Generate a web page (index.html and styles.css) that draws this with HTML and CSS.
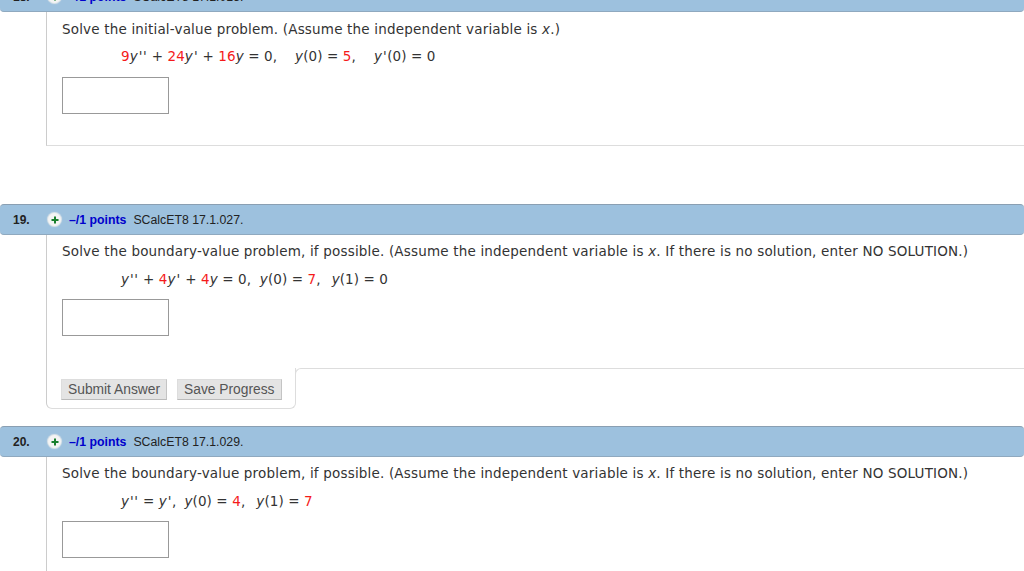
FILE: index.html
```html
<!DOCTYPE html>
<html lang="en">
<head>
  <meta charset="UTF-8">
  <title>Assignment</title>
  <link rel="stylesheet" href="styles.css">
</head>
<body>
  <div class="page">
    <!-- Question 18, scrolled off the top -->
    <section class="question first">
      <div class="bar">
        <span class="num">18.</span>
        <span class="plus"><svg width="8" height="8" viewBox="0 0 8 8"><path d="M3 0.5h2v2.500h2.500v2h-2.500v2.500h-2v-2.500h-2.500v-2h2.500z" fill="#1a7f2e"/></svg></span>
        <span class="points">&#8211;/1 points</span>
        <span class="ref">SCalcET8 17.1.015.</span>
      </div>
      <div class="content closed">
        <p class="text">Solve the initial-value problem. (Assume the independent variable is <i>x</i>.)</p>
        <p class="eq"><span class="red">9</span><i>y</i><i class="primes">''</i> + <span class="red">24</span><i>y</i><i class="primes">'</i> + <span class="red">16</span><i>y</i> = 0,<span class="wide"></span><i>y</i>(0) = <span class="red">5</span>,<span class="wide"></span><i>y</i><i class="primes">'</i>(0) = 0</p>
        <div class="answer"></div>
      </div>
    </section>

    <section class="question second">
      <div class="bar">
        <span class="num">19.</span>
        <span class="plus"><svg width="8" height="8" viewBox="0 0 8 8"><path d="M3 0.5h2v2.500h2.500v2h-2.500v2.500h-2v-2.500h-2.500v-2h2.500z" fill="#1a7f2e"/></svg></span>
        <span class="points">&#8211;/1 points</span>
        <span class="ref">SCalcET8 17.1.027.</span>
      </div>
      <div class="content">
        <p class="text">Solve the boundary-value problem, if possible. (Assume the independent variable is <i>x</i>. If there is no solution, enter NO SOLUTION.)</p>
        <p class="eq"><i>y</i><i class="primes">''</i> + <span class="red">4</span><i>y</i><i class="primes">'</i> + <span class="red">4</span><i>y</i> = 0,&nbsp; <i>y</i>(0) = <span class="red">7</span>,<span class="gap"></span><i>y</i>(1) = 0</p>
        <div class="answer"></div>
      </div>
      <div class="actions">
        <div class="buttons">
          <button class="btn">Submit Answer</button>
          <button class="btn">Save Progress</button>
        </div>
        <div class="rest"></div>
      </div>
    </section>

    <section class="question">
      <div class="bar">
        <span class="num">20.</span>
        <span class="plus"><svg width="8" height="8" viewBox="0 0 8 8"><path d="M3 0.5h2v2.500h2.500v2h-2.500v2.500h-2v-2.500h-2.500v-2h2.500z" fill="#1a7f2e"/></svg></span>
        <span class="points">&#8211;/1 points</span>
        <span class="ref">SCalcET8 17.1.029.</span>
      </div>
      <div class="content">
        <p class="text">Solve the boundary-value problem, if possible. (Assume the independent variable is <i>x</i>. If there is no solution, enter NO SOLUTION.)</p>
        <p class="eq"><i>y</i><i class="primes">''</i> = <i>y</i><i class="primes">'</i>,<span class="gap tight"></span><i>y</i>(0) = <span class="red">4</span>,<span class="gap"></span><i>y</i>(1) = <span class="red">7</span></p>
        <div class="answer"></div>
      </div>
    </section>
  </div>
</body>
</html>
```

FILE: styles.css
```css
html, body {
  margin: 0;
  padding: 0;
  height: 571px;
  overflow: hidden;
  background: #ffffff;
}

.page {
  margin-top: -19px;
  font-family: "DejaVu Sans", Verdana, sans-serif;
  font-size: 13.5px;
  color: #333333;
}

.question.first {
  margin-bottom: 58px;
}

.question.second {
  margin-bottom: 17px;
}

/* Blue header bar */
.bar {
  display: flex;
  align-items: center;
  box-sizing: border-box;
  height: 31px;
  background: #9dc1de;
  border: 1px solid #8fa9bf;
  border-top-color: #8a9fb2;
  border-left: none;
  border-right: none;
  border-radius: 4px;
  font-family: "Liberation Sans", Arial, sans-serif;
  font-size: 12.3px;
}

.num {
  width: 48px;
  padding-left: 13px;
  box-sizing: border-box;
  font-size: 12px;
  font-weight: bold;
  color: #222222;
}

.plus {
  display: flex;
  align-items: center;
  justify-content: center;
  width: 13px;
  height: 13px;
  border-radius: 50%;
  background: #f4f4f4;
  box-shadow: 0 0 1px 1px #dfe6ea;
}

.points {
  margin-left: 8px;
  font-weight: bold;
  color: #0000cc;
}

.ref {
  margin-left: 7px;
  color: #222222;
}

/* Question body */
.content {
  margin-left: 46px;
  padding: 7px 15px 32px;
  border-left: 1px solid #cccccc;
}

.content.closed {
  height: 125px;
  padding: 8px 15px 0;
  border-bottom: 1px solid #dddddd;
}

.text {
  margin: 0;
  line-height: 18px;
  letter-spacing: 0.18px;
}

.eq {
  margin: 10px 0 0 59px;
  line-height: 18px;
  letter-spacing: 0.1px;
}

.closed .eq {
  margin-top: 9px;
}

.primes {
  margin-left: 1px;
  letter-spacing: 0.5px;
}

.red {
  color: #f51a1a;
}

.gap {
  display: inline-block;
  width: 11px;
}

.gap.tight {
  width: 8px;
}

.wide {
  display: inline-block;
  width: 18px;
}

.answer {
  box-sizing: border-box;
  width: 107px;
  height: 37px;
  margin-top: 11px;
  background: #ffffff;
  border: 1px solid #999999;
}

.closed .answer {
  margin-top: 12px;
}

/* Button tab with notched border */
.actions {
  display: flex;
  margin-left: 46px;
}

.buttons {
  display: flex;
  align-items: flex-start;
  gap: 10px;
  box-sizing: border-box;
  width: 250px;
  height: 41px;
  padding: 11px 0 0 14px;
  border: 1px solid #dddddd;
  border-top: none;
  border-left-color: #cccccc;
  border-radius: 0 0 6px 6px;
}

.rest {
  flex: 1;
  height: 10px;
  margin-left: -1px;
  border-top: 1px solid #dddddd;
  border-left: 1px solid #dddddd;
  border-top-left-radius: 6px;
}

.btn {
  height: 21px;
  padding: 0 6px;
  background: #e4e4e4;
  border: 1px solid #dddddd;
  border-bottom-color: #bbbbbb;
  border-right-color: #c4c4c4;
  font-family: "Liberation Sans", Arial, sans-serif;
  font-size: 13.8px;
  color: #555555;
}
```
